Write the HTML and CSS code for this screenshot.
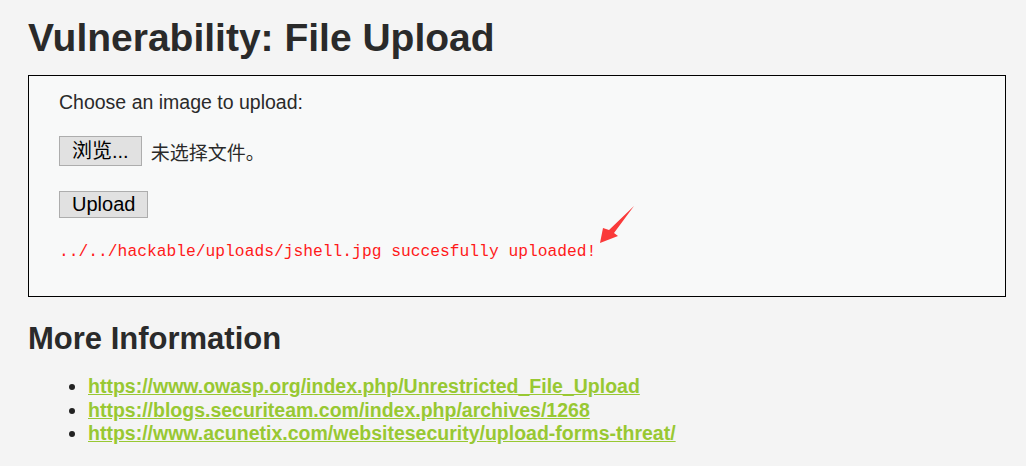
FILE: index.html
```html
<!DOCTYPE html>
<html lang="en">

<head>
    <meta charset="UTF-8">
    <title>Vulnerability: File Upload</title>
    <link rel="stylesheet" href="styles.css">
</head>

<body>
    <div class="body_padded">
        <h1>Vulnerability: File Upload</h1>

        <div class="vulnerable_code_area">
            <form enctype="multipart/form-data" action="#" method="POST">
                <p class="label">Choose an image to upload:</p>
                <div class="file_row">
                    <button type="button" class="btn">浏览...</button>
                    <span class="no_file">未选择文件。</span>
                </div>
                <div class="upload_row">
                    <button type="button" class="btn">Upload</button>
                </div>
            </form>
            <pre class="result">../../hackable/uploads/jshell.jpg succesfully uploaded!<svg class="mark" width="40" height="44" viewBox="590 200 40 44"><polygon points="629,204 609,231 613,234 595,241 598,226 604,228" fill="#fa3a3a"/></svg></pre>
        </div>

        <h2>More Information</h2>
        <ul>
            <li><a href="#">https://www.owasp.org/index.php/Unrestricted_File_Upload</a></li>
            <li><a href="#">https://blogs.securiteam.com/index.php/archives/1268</a></li>
            <li><a href="#">https://www.acunetix.com/websitesecurity/upload-forms-threat/</a></li>
        </ul>
    </div>
</body>

</html>
```

FILE: styles.css
```css
body {
    margin: 0;
    background-color: #f4f4f4;
    color: #2a2a2a;
    font-family: "Liberation Sans", Arial, "Noto Sans CJK SC", sans-serif;
}

.body_padded {
    padding: 1px 20px 0 28px;
}

h1 {
    font-size: 39px;
    margin: 14px 0 14px 0;
    line-height: 46px;
}

.vulnerable_code_area {
    position: relative;
    border: 1px solid #000;
    background-color: #f8f9f9;
    padding: 14px 30px 30px 30px;
}

.label {
    font-size: 19.5px;
    margin: 0 0 22px 0;
    line-height: 24px;
}

.file_row {
    display: flex;
    align-items: center;
    gap: 9px;
}

.btn {
    font-family: "Liberation Sans", Arial, "Noto Sans CJK SC", sans-serif;
    font-size: 20px;
    color: #000;
    background-color: #e1e1e1;
    border: 1px solid #adadad;
    border-radius: 0;
    padding: 0 12px;
    height: 30px;
    line-height: 28px;
}

.no_file {
    font-size: 19px;
    font-family: "Noto Sans CJK SC", sans-serif;
}

.upload_row {
    margin-top: 25px;
}

.upload_row .btn {
    height: 27px;
    line-height: 25px;
}

.result {
    position: relative;
    margin: 20px 0 0 0;
    color: #ff1a1a;
    font-family: "Liberation Mono", "Courier New", monospace;
    font-size: 16.3px;
    line-height: 28px;
}

.mark {
    position: absolute;
    left: 536px;
    top: -36px;
}

h2 {
    font-size: 31px;
    margin: 24px 0 18px 0;
    line-height: 36px;
}

ul {
    margin: 0;
    padding-left: 60px;
    font-size: 19.5px;
    line-height: 23.5px;
}

li::marker {
    color: #222;
}

a {
    color: #98c832;
    font-weight: bold;
}
```
